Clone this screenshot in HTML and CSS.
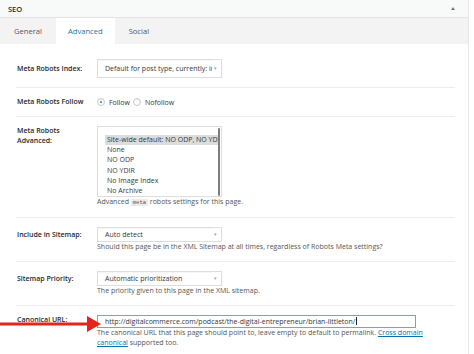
FILE: index.html
```html
<!DOCTYPE html>
<html lang="en">

<head>
    <meta charset="UTF-8">
    <meta name="viewport" content="width=device-width, initial-scale=1.0">
    <title>SEO</title>
    <link rel="stylesheet" href="styles.css">
</head>

<body>
    <div class="metabox">
        <div class="metabox-head">
            <h2>SEO</h2>
            <span class="toggle"></span>
        </div>

        <ul class="tabs">
            <li>General</li>
            <li class="active">Advanced</li>
            <li>Social</li>
        </ul>

        <div class="panel">
            <div class="row">
                <div class="label label-mid">Meta Robots Index:</div>
                <div class="field">
                    <div class="select select-tall">Default for post type, currently: ir<span class="caret">&#9662;</span></div>
                </div>
            </div>

            <div class="row">
                <div class="label label-flat">Meta Robots Follow</div>
                <div class="field radios">
                    <span class="radio checked"></span><span class="radio-text">Follow</span>
                    <span class="radio"></span><span class="radio-text">Nofollow</span>
                </div>
            </div>

            <div class="row">
                <div class="label label-flat">Meta Robots Advanced:</div>
                <div class="field">
                    <div class="multi">
                        <div class="option selected">Site-wide default: NO ODP, NO YDIR</div>
                        <div class="option">None</div>
                        <div class="option">NO ODP</div>
                        <div class="option">NO YDIR</div>
                        <div class="option">No Image Index</div>
                        <div class="option">No Archive</div>
                        <div class="option">No Snippet</div>
                        <span class="scroll-thumb"></span>
                    </div>
                    <p class="desc">Advanced <code>meta</code> robots settings for this page.</p>
                </div>
            </div>

            <div class="row">
                <div class="label">Include in Sitemap:</div>
                <div class="field">
                    <div class="select">Auto detect<span class="caret">&#9662;</span></div>
                    <p class="desc">Should this page be in the XML Sitemap at all times, regardless of Robots Meta settings?</p>
                </div>
            </div>

            <div class="row">
                <div class="label">Sitemap Priority:</div>
                <div class="field">
                    <div class="select">Automatic prioritization<span class="caret">&#9662;</span></div>
                    <p class="desc">The priority given to this page in the XML sitemap.</p>
                </div>
            </div>

            <div class="row row-last">
                <div class="label label-flat">Canonical URL:</div>
                <div class="field">
                    <div class="input">http://digitalcommerce.com/podcast/the-digital-entrepreneur/brian-littleton/<span class="cursor"></span></div>
                    <p class="desc">The canonical URL that this page should point to, leave empty to default to permalink. <a href="#">Cross domain canonical</a> supported too.</p>
                </div>
            </div>
        </div>
    </div>

    <svg class="arrow" width="104" height="18" viewBox="0 0 104 18">
        <rect x="0" y="7.5" width="89" height="3" fill="#e3261c" />
        <polygon points="87,1 101,9 87,17" fill="#e3261c" />
    </svg>
</body>

</html>
```

FILE: styles.css
```css
body {
    margin: 0;
    font-family: "Open Sans", "Liberation Sans", sans-serif;
    color: #444;
    background: #fff;
}

.metabox {
    width: 469px;
    min-height: 354px;
    border-right: 1px solid #e8e8e8;
    box-sizing: border-box;
}

.metabox-head {
    height: 17px;
    display: flex;
    align-items: center;
    justify-content: space-between;
    padding: 0 13px 0 8px;
    background: #f8f9f9;
    border-bottom: 1px solid #e4e4e4;
}

.metabox-head h2 {
    margin: 0;
    font-size: 7.5px;
    font-weight: 600;
    color: #23282d;
}

.toggle {
    width: 0;
    height: 0;
    border-left: 2.5px solid transparent;
    border-right: 2.5px solid transparent;
    border-bottom: 3px solid #72777c;
}

.tabs {
    display: flex;
    gap: 2px;
    margin: 0;
    padding: 0 0 0 2px;
    list-style: none;
    height: 26px;
    background: #f3f3f3;
}

.tabs li {
    padding: 0 12px;
    line-height: 26px;
    font-size: 7.6px;
    color: #555;
}

.tabs li.active {
    background: #fff;
    color: #21759b;
}

.panel {
    padding: 6px 13px 0 16px;
}

.row {
    display: grid;
    grid-template-columns: 81px 1fr;
    padding: 9px 0;
    border-bottom: 1px solid #ededed;
}

.row-last {
    border-bottom: none;
}

.label {
    padding: 3px 8px 0 1px;
    font-size: 7px;
    font-weight: 600;
    line-height: 10px;
    color: #23282d;
}

.label-mid {
    padding-top: 5px;
}

.label-flat {
    padding-top: 0;
}

.field {
    min-width: 0;
}

.select {
    position: relative;
    width: 125px;
    height: 15px;
    box-sizing: border-box;
    padding: 0 0 0 7px;
    border: 1px solid #ddd;
    box-shadow: inset 0 1px 1px rgba(0, 0, 0, 0.04);
    font-size: 7px;
    line-height: 13px;
    color: #32373c;
    white-space: nowrap;
    overflow: hidden;
}

.select-tall {
    height: 19px;
    line-height: 17px;
}

.caret {
    position: absolute;
    right: 0;
    top: 0;
    padding: 0 4px 0 2px;
    background: #fff;
    font-size: 5px;
    color: #a0a5aa;
}

.radios {
    display: flex;
    align-items: center;
    height: 10px;
    font-size: 7px;
    color: #32373c;
}

.radio {
    width: 6px;
    height: 6px;
    border: 1px solid #c8c8c8;
    border-radius: 50%;
    display: flex;
    align-items: center;
    justify-content: center;
    box-shadow: inset 0 1px 1px rgba(0, 0, 0, 0.08);
}

.radio.checked::after {
    content: "";
    width: 2.5px;
    height: 2.5px;
    border-radius: 50%;
    background: #1e8cbe;
}

.radio-text {
    margin: 0 3px 0 4px;
}

.multi {
    position: relative;
    width: 125px;
    height: 71px;
    box-sizing: border-box;
    padding: 8px 3px 0 7px;
    border: 1px solid #ddd;
    overflow: hidden;
}

.option {
    padding-left: 2px;
    font-size: 7px;
    line-height: 10.2px;
    color: #32373c;
    white-space: nowrap;
    overflow: hidden;
}

.option.selected {
    background: #dcdcdc;
}

.scroll-thumb {
    position: absolute;
    right: 1px;
    top: 1px;
    width: 2px;
    height: 68px;
    border-radius: 1px;
    background: #7d7d7d;
}

.input {
    width: 319px;
    height: 13px;
    box-sizing: border-box;
    padding-left: 7px;
    border: 1px solid #8e9dab;
    font-size: 7px;
    line-height: 11px;
    color: #32373c;
    white-space: nowrap;
    overflow: hidden;
}

.cursor {
    display: inline-block;
    width: 1px;
    height: 8px;
    margin-left: 1px;
    vertical-align: -1px;
    background: #222;
}

.desc {
    margin: 0;
    font-size: 7px;
    line-height: 10px;
    color: #555;
}

.desc code {
    padding: 0 2px;
    background: #eaeaea;
    font-family: "Liberation Mono", monospace;
    font-size: 5.5px;
}

.desc a {
    color: #0073aa;
}

.arrow {
    position: absolute;
    left: 0;
    top: 315px;
}
```
